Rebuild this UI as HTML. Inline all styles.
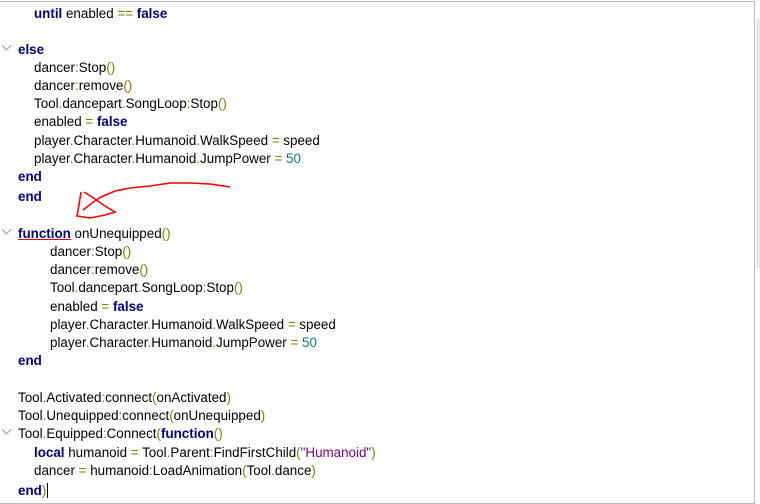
<!DOCTYPE html>
<html><head><meta charset="utf-8"><style>
html,body{margin:0;padding:0;background:#fff;}
body{width:760px;height:504px;position:relative;overflow:hidden;font-family:"Liberation Sans",sans-serif;font-size:13.4px;color:#000;}
.frame{position:absolute;left:0;top:1px;width:754px;height:501px;border-top:1px solid #bbb;border-right:1px solid #bbb;border-bottom:1px solid #bbb;}
.sb{position:absolute;left:755px;top:1px;width:5px;height:502px;background:#fff;}
.thumb{position:absolute;left:756px;top:19px;width:4px;height:249px;background:#e8e8e8;}
.l{position:absolute;left:18px;height:18px;line-height:18px;white-space:pre;}
.i1{left:34px}.i2{left:50px}
.k{color:#00007f;font-weight:bold}
.o{color:#7f7f00}
.n{color:#007f7f}
.s{color:#7f007f}
.u{text-decoration:underline;text-decoration-color:#d00;}
.f{position:absolute;left:3px;width:6px;height:6px;border-right:1px solid #999;border-bottom:1px solid #999;transform:rotate(45deg);}
</style></head><body>
<div class="frame"></div>
<div class="sb"></div><div class="thumb"></div>
<div class="l i1" style="top:5px"><span class="k">until</span> enabled <span class="o">==</span> <span class="k">false</span></div>
<div class="f" style="top:42px"></div>
<div class="l" style="top:41px"><span class="k">else</span></div>
<div class="l i1" style="top:59px">dancer<span class="o">:</span>Stop<span class="o">()</span></div>
<div class="l i1" style="top:77px">dancer<span class="o">:</span>remove<span class="o">()</span></div>
<div class="l i1" style="top:95px">Tool<span class="o">.</span>dancepart<span class="o">.</span>SongLoop<span class="o">:</span>Stop<span class="o">()</span></div>
<div class="l i1" style="top:113px">enabled <span class="o">=</span> <span class="k">false</span></div>
<div class="l i1" style="top:132px">player<span class="o">.</span>Character<span class="o">.</span>Humanoid<span class="o">.</span>WalkSpeed <span class="o">=</span> speed</div>
<div class="l i1" style="top:150px">player<span class="o">.</span>Character<span class="o">.</span>Humanoid<span class="o">.</span>JumpPower <span class="o">=</span> <span class="n">50</span></div>
<div class="l" style="top:168px"><span class="k">end</span></div>
<div class="l" style="top:188px"><span class="k">end</span></div>
<div class="f" style="top:226px"></div>
<div class="l" style="top:225px"><span class="k u">function</span> onUnequipped<span class="o">()</span></div>
<div class="l i2" style="top:243px">dancer<span class="o">:</span>Stop<span class="o">()</span></div>
<div class="l i2" style="top:261px">dancer<span class="o">:</span>remove<span class="o">()</span></div>
<div class="l i2" style="top:279px">Tool<span class="o">.</span>dancepart<span class="o">.</span>SongLoop<span class="o">:</span>Stop<span class="o">()</span></div>
<div class="l i2" style="top:298px">enabled <span class="o">=</span> <span class="k">false</span></div>
<div class="l i2" style="top:316px">player<span class="o">.</span>Character<span class="o">.</span>Humanoid<span class="o">.</span>WalkSpeed <span class="o">=</span> speed</div>
<div class="l i2" style="top:334px">player<span class="o">.</span>Character<span class="o">.</span>Humanoid<span class="o">.</span>JumpPower <span class="o">=</span> <span class="n">50</span></div>
<div class="l" style="top:352px"><span class="k">end</span></div>
<div class="l" style="top:389px">Tool<span class="o">.</span>Activated<span class="o">:</span>connect<span class="o">(</span>onActivated<span class="o">)</span></div>
<div class="l" style="top:407px">Tool<span class="o">.</span>Unequipped<span class="o">:</span>connect<span class="o">(</span>onUnequipped<span class="o">)</span></div>
<div class="f" style="top:426px"></div>
<div class="l" style="top:425px">Tool<span class="o">.</span>Equipped<span class="o">:</span>Connect<span class="o">(</span><span class="k">function</span><span class="o">()</span></div>
<div class="l i1" style="top:444px"><span class="k">local</span> humanoid <span class="o">=</span> Tool<span class="o">.</span>Parent<span class="o">:</span>FindFirstChild<span class="o">(</span><span class="s">"Humanoid"</span><span class="o">)</span></div>
<div class="l i1" style="top:462px">dancer <span class="o">=</span> humanoid<span class="o">:</span>LoadAnimation<span class="o">(</span>Tool<span class="o">.</span>dance<span class="o">)</span></div>
<div class="l" style="top:482px"><span class="k">end</span><span class="o">)</span><span style="border-left:1px solid #000;margin-left:1px"></span></div>
<svg style="position:absolute;left:0;top:0" width="760" height="504">
<path d="M83 210 L92 203 L101 197 L115 191 L130 188 L150 186 L170 183 L190 183 L210 184 L230 187" fill="none" stroke="#f00" stroke-width="1.6"/>
<path d="M81 192 L79 205 L77 216 L90 218 L105 215 L115 212 L105 206 L92 197 L84 192" fill="none" stroke="#f00" stroke-width="1.6"/>
</svg>
</body></html>
